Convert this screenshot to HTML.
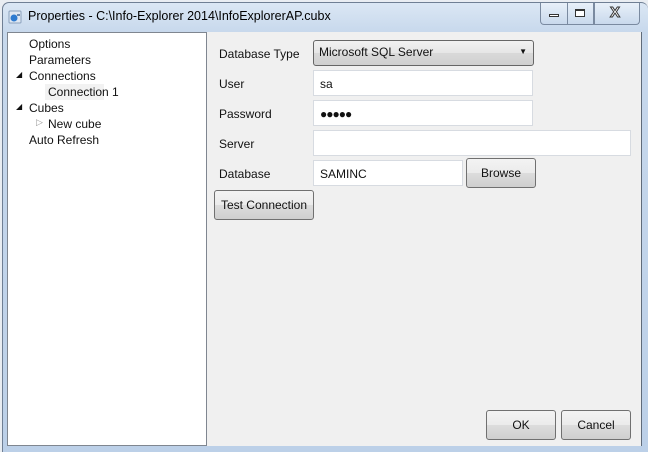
<!DOCTYPE html>
<html><head><meta charset="utf-8"><style>
*{margin:0;padding:0;box-sizing:border-box}
html,body{width:648px;height:452px;overflow:hidden}
body{background:#e9edf2;font-family:"Liberation Sans",sans-serif;font-size:12px;color:#111;position:relative}
.frame{position:absolute;left:2px;top:2px;width:646px;height:450px;border-radius:7px 7px 0 0;background:linear-gradient(#dbe7f4,#c7d8ec 30px,#bcd0e8);border:1px solid #6f7f94;border-right:none;border-bottom:none}
.abs{position:absolute}
.title{left:28px;top:9px;font-size:12.5px;color:#000}
.left{left:7px;top:32px;width:200px;height:414px;background:#fff;border:1px solid #7f8690}
.right{left:207px;top:32px;width:435px;height:414px;background:#f0f0f0;border-right:1px solid #5f6b7a}
.tree div{position:absolute;font-size:12px}
.lbl{position:absolute;font-size:12px}
.inp{position:absolute;background:#fff;border:1px solid #d7dbe1;height:26px;padding:6px 0 0 6px;font-size:12px}
.btn{position:absolute;border:1px solid #707070;border-radius:3px;background:linear-gradient(#f3f3f3,#ebebeb 50%,#dddddd 50%,#cfcfcf);text-align:center;font-size:12px}
.ctl{position:absolute;top:3px;height:22px;border:1px solid #7a8aa0;background:linear-gradient(#e8f0f9,#c9d9ec)}
</style></head><body>
<div class="frame"></div>
<svg class="abs" style="left:8px;top:10px" width="14" height="14"><rect x="1" y="1" width="12" height="12" rx="1" fill="#dfe7f2" stroke="#8aa0bc"/><circle cx="6" cy="8" r="3.5" fill="#2e7bd0"/><rect x="9" y="4" width="3" height="2" fill="#6a89b0"/></svg>
<div class="abs title">Properties - C:\Info-Explorer 2014\InfoExplorerAP.cubx</div>
<div class="ctl" style="left:540px;width:28px;border-radius:0 0 0 4px;border-top:none"></div>
<div class="ctl" style="left:567px;width:27px;border-top:none"></div>
<div class="ctl" style="left:594px;width:46px;border-radius:0 0 4px 0;border-top:none"></div>
<div class="abs" style="left:549px;top:14px;width:10px;height:3px;border:1px solid #333;background:#fff"></div>
<div class="abs" style="left:575px;top:9px;width:10px;height:8px;border:1px solid #333;border-top-width:2px;background:#fff"></div>
<div class="abs" style="left:610px;top:4px;font-size:15px;font-weight:bold;color:#fff;-webkit-text-stroke:1px #333">X</div>
<div class="abs left tree">
<div style="left:21px;top:4px">Options</div>
<div style="left:21px;top:20px">Parameters</div>
<div style="left:8px;top:37px;font-size:8px">◢</div>
<div style="left:21px;top:36px">Connections</div>
<div style="left:37px;top:51px;width:59px;height:16px;background:#f2f2f2"></div>
<div style="left:40px;top:52px">Connection 1</div>
<div style="left:8px;top:69px;font-size:8px">◢</div>
<div style="left:21px;top:68px">Cubes</div>
<div style="left:28px;top:84px;font-size:9px;color:#999">▷</div>
<div style="left:40px;top:84px">New cube</div>
<div style="left:21px;top:100px">Auto Refresh</div>
</div>
<div class="abs right"></div>
<div class="lbl" style="left:219px;top:47px">Database Type</div>
<div class="btn" style="left:313px;top:40px;width:221px;height:26px;text-align:left;padding:4px 0 0 5px;background:linear-gradient(#f2f2f2,#e6e6e6 50%,#d9d9d9 50%,#d0d0d0);border-color:#666">Microsoft SQL Server<span style="position:absolute;right:6px;top:6px;font-size:8px">▼</span></div>
<div class="lbl" style="left:219px;top:77px">User</div>
<div class="inp" style="left:313px;top:70px;width:220px">sa</div>
<div class="lbl" style="left:219px;top:107px">Password</div>
<div class="inp" style="left:313px;top:100px;width:220px;letter-spacing:-1px">●●●●●</div>
<div class="lbl" style="left:219px;top:137px">Server</div>
<div class="inp" style="left:313px;top:130px;width:318px"></div>
<div class="lbl" style="left:219px;top:167px">Database</div>
<div class="inp" style="left:313px;top:160px;width:150px">SAMINC</div>
<div class="btn" style="left:466px;top:158px;width:70px;height:30px;line-height:28px">Browse</div>
<div class="btn" style="left:214px;top:190px;width:100px;height:30px;line-height:28px">Test Connection</div>
<div class="btn" style="left:486px;top:410px;width:70px;height:30px;line-height:28px">OK</div>
<div class="btn" style="left:561px;top:410px;width:70px;height:30px;line-height:28px">Cancel</div>
</body></html>
